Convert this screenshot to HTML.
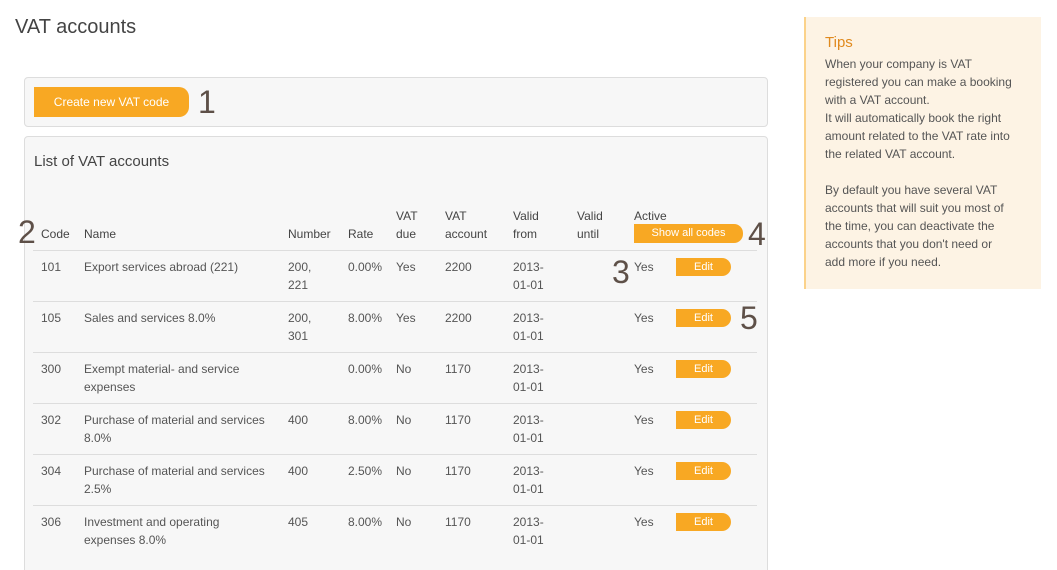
<!DOCTYPE html><html><head><style>
html,body{margin:0;width:1057px;height:570px;overflow:hidden}
body{background:#fff;font-family:"Liberation Sans",sans-serif;color:#555;position:relative}
.a{position:absolute}
.p{position:absolute;background:#f7f7f7;border:1px solid #ddd;border-radius:4px}
.btn{position:absolute;background:#f8a823;color:#fff;border-radius:0 9px 9px 0;text-align:center;font-size:11px}
.c{position:absolute;font-size:12px;line-height:18px;color:#555}
.h{position:absolute;font-size:12px;line-height:18px;color:#444}
.ln{position:absolute;left:33px;width:724px;height:1px;background:#ddd}
.n{position:absolute;font-size:32px;color:#5e5048;line-height:32px}
</style></head><body>
<div class="a" style="left:15px;top:16px;font-size:20px;color:#444">VAT accounts</div>
<div class="p" style="left:24px;top:77px;width:742px;height:48px"></div>
<div class="btn" style="left:34px;top:87px;width:155px;height:30px;line-height:30px;border-radius:0 10px 10px 0;font-size:12px">Create new VAT code</div>
<div class="n" style="left:198px;top:86px">1</div>
<div class="p" style="left:24px;top:136px;width:742px;height:450px"></div>
<div class="a" style="left:34px;top:153px;font-size:15px;color:#444">List of VAT accounts</div>
<div class="n" style="left:18px;top:216px">2</div>
<div class="h" style="left:41px;top:225px">Code</div>
<div class="h" style="left:84px;top:225px">Name</div>
<div class="h" style="left:288px;top:225px">Number</div>
<div class="h" style="left:348px;top:225px">Rate</div>
<div class="h" style="left:396px;top:207px">VAT<br>due</div>
<div class="h" style="left:445px;top:207px">VAT<br>account</div>
<div class="h" style="left:513px;top:207px">Valid<br>from</div>
<div class="h" style="left:577px;top:207px">Valid<br>until</div>
<div class="h" style="left:634px;top:207px">Active</div>
<div class="btn" style="left:634px;top:224px;width:109px;height:19px;line-height:19px">Show all codes</div>
<div class="n" style="left:748px;top:218px">4</div>
<div class="ln" style="top:250px"></div>
<div id="rows"></div>
<div class="n" style="left:612px;top:256px">3</div>
<div class="n" style="left:740px;top:302px">5</div>
<div class="a" style="left:804px;top:17px;width:235px;height:272px;background:#fdf3e4;border-left:2px solid #fbd28a"></div>
<div class="a" style="left:825px;top:34px;font-size:15px;color:#e08a1e">Tips</div>
<div class="a" style="left:825px;top:55px;font-size:12px;line-height:18px;color:#555;width:200px">When your company is VAT<br>registered you can make a booking<br>with a VAT account.<br>It will automatically book the right<br>amount related to the VAT rate into<br>the related VAT account.<br><br>By default you have several VAT<br>accounts that will suit you most of<br>the time, you can deactivate the<br>accounts that you don't need or<br>add more if you need.</div>
<script>
var d=[["101","Export services abroad (221)","200,<br>221","0.00%","Yes","2200"],["105","Sales and services 8.0%","200,<br>301","8.00%","Yes","2200"],["300","Exempt material- and service<br>expenses","","0.00%","No","1170"],["302","Purchase of material and services<br>8.0%","400","8.00%","No","1170"],["304","Purchase of material and services<br>2.5%","400","2.50%","No","1170"],["306","Investment and operating<br>expenses 8.0%","405","8.00%","No","1170"]];
var h="",xs=[41,84,288,348,396,445];
d.forEach(function(r,i){var y=258+i*51;r.forEach(function(v,j){h+='<div class="c" style="left:'+xs[j]+'px;top:'+y+'px">'+v+'</div>'});
h+='<div class="c" style="left:513px;top:'+y+'px">2013-<br>01-01</div><div class="c" style="left:634px;top:'+y+'px">Yes</div><div class="btn" style="left:676px;top:'+y+'px;width:55px;height:18px;line-height:18px">Edit</div>';
if(i<5)h+='<div class="ln" style="top:'+(301+i*51)+'px"></div>'});
document.getElementById("rows").innerHTML=h;
</script>
</body></html>
